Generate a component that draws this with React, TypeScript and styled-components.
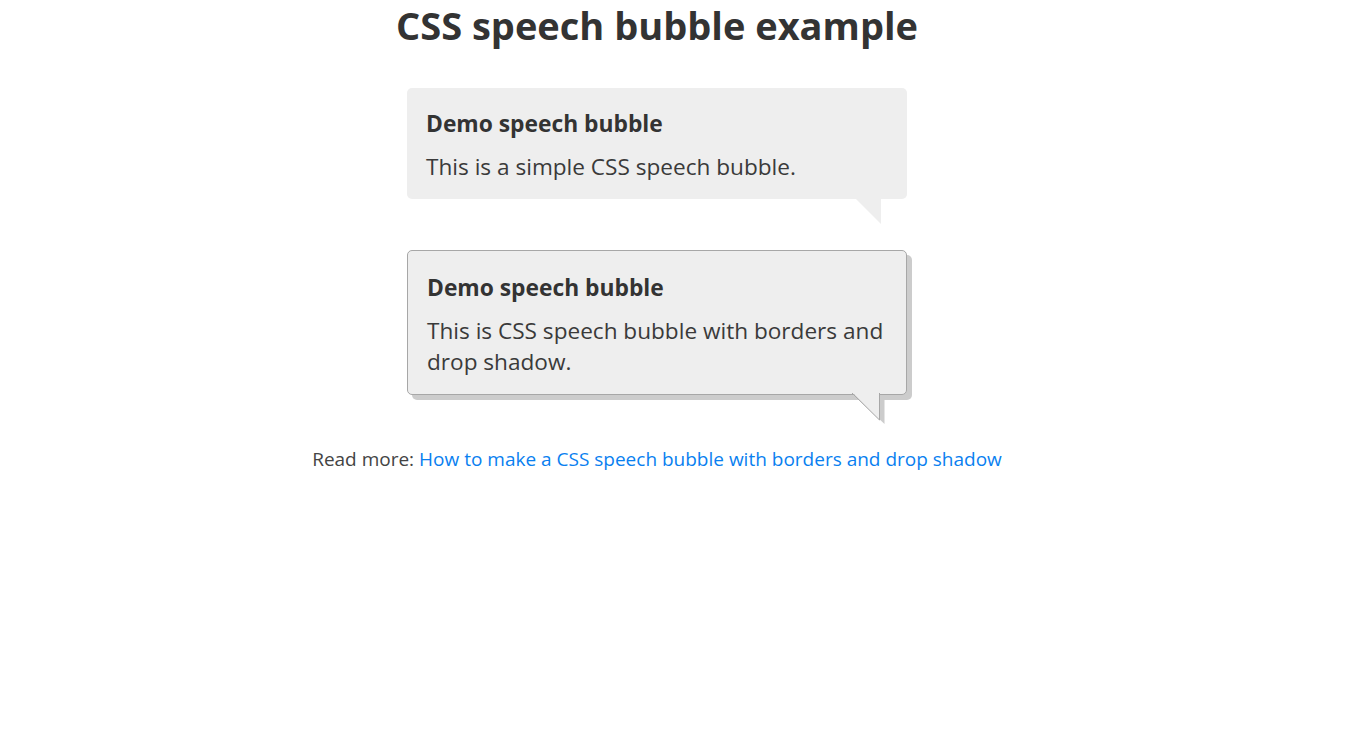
import React from "react";
import styled, { createGlobalStyle } from "styled-components";

const GlobalStyle = createGlobalStyle`
  html, body {
    margin: 0;
    padding: 0;
    background: #fff;
  }
  body {
    font-family: "Open Sans", "Noto Sans", Arial, sans-serif;
    color: #333;
  }
`;

const Page = styled.main`
  width: 1314px;
  display: flex;
  flex-direction: column;
  align-items: center;
`;

const Title = styled.h1`
  margin: 0;
  font-size: 38px;
  line-height: 50px;
  font-weight: 700;
  color: #333;
`;

const Bubble = styled.div<{ $bordered?: boolean }>`
  position: relative;
  box-sizing: border-box;
  width: 500px;
  background: #eee;
  border-radius: 5px;
  padding: ${(p) => (p.$bordered ? "21px 19px 17px" : "20px 19px 17px")};
  border: ${(p) => (p.$bordered ? "1px solid #a7a7a7" : "none")};
  box-shadow: ${(p) => (p.$bordered ? "5px 5px 0 #ccc" : "none")};
`;

const FirstBubble = styled(Bubble)`
  margin-top: 38px;
`;

const SecondBubble = styled(Bubble)`
  margin-top: 51px;
`;

const BubbleTitle = styled.h3`
  margin: 0 0 12px;
  font-size: 22.8px;
  line-height: 31px;
  font-weight: 700;
  color: #333;
`;

const BubbleText = styled.p`
  margin: 0;
  font-size: 22.6px;
  line-height: 31px;
  color: #3a3a3a;
`;

/* plain tail: a filled right triangle hanging from the bottom edge */
const PlainTail = styled.span`
  position: absolute;
  right: 26px;
  bottom: -25px;
  width: 0;
  height: 0;
  border-top: 25px solid #eee;
  border-left: 25px solid transparent;
`;

const BorderedTail = styled.svg`
  position: absolute;
  right: 20px;
  top: calc(100% - 2px);
  overflow: visible;
`;

const ReadMore = styled.p`
  margin: 50px 0 0;
  font-size: 19px;
  line-height: 28px;
  color: #444;
`;

const Link = styled.a`
  color: #0a7ff0;
  text-decoration: none;
`;

export default function App() {
  return (
    <>
      <GlobalStyle />
      <Page>
        <Title>CSS speech bubble example</Title>

        <FirstBubble>
          <BubbleTitle>Demo speech bubble</BubbleTitle>
          <BubbleText>This is a simple CSS speech bubble.</BubbleText>
          <PlainTail />
        </FirstBubble>

        <SecondBubble $bordered>
          <BubbleTitle>Demo speech bubble</BubbleTitle>
          <BubbleText>
            This is CSS speech bubble with borders and drop shadow.
          </BubbleText>
          <BorderedTail width="34" height="34" viewBox="0 0 34 34">
            <polygon points="5,6 32.5,6 32.5,32" fill="#ccc" />
            <polygon points="0,0 27.5,0 27.5,28" fill="#eee" />
            <polyline
              points="0,1 27.5,28 27.5,1"
              fill="none"
              stroke="#a7a7a7"
              strokeWidth="1"
            />
          </BorderedTail>
        </SecondBubble>

        <ReadMore>
          Read more:{" "}
          <Link href="#">
            How to make a CSS speech bubble with borders and drop shadow
          </Link>
        </ReadMore>
      </Page>
    </>
  );
}
